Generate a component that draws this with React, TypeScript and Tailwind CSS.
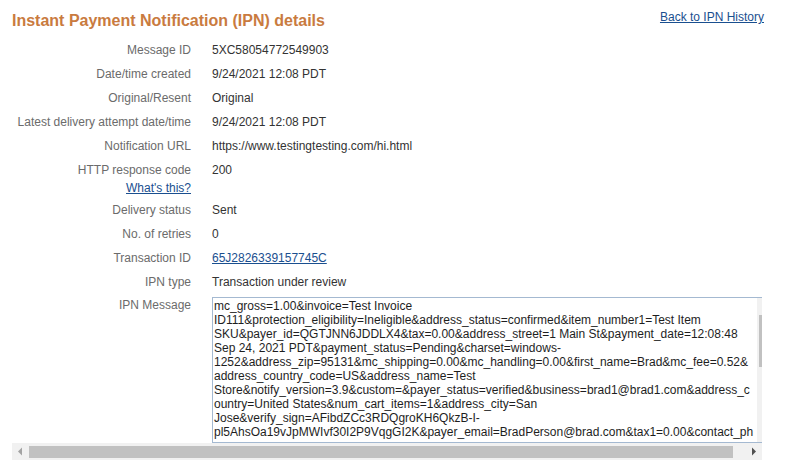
import React from "react";

const rows: { label: string; value: React.ReactNode }[] = [
  { label: "Message ID", value: "5XC58054772549903" },
  { label: "Date/time created", value: "9/24/2021 12:08 PDT" },
  { label: "Original/Resent", value: "Original" },
  { label: "Latest delivery attempt date/time", value: "9/24/2021 12:08 PDT" },
  { label: "Notification URL", value: "https://www.testingtesting.com/hi.html" },
];

const rowsAfter: { label: string; value: React.ReactNode }[] = [
  { label: "Delivery status", value: "Sent" },
  { label: "No. of retries", value: "0" },
  {
    label: "Transaction ID",
    value: (
      <a href="#" className="text-[#1a4f8f] underline">
        65J2826339157745C
      </a>
    ),
  },
  { label: "IPN type", value: "Transaction under review" },
];

const messageLines = [
  "mc_gross=1.00&invoice=Test Invoice",
  "ID111&protection_eligibility=Ineligible&address_status=confirmed&item_number1=Test Item",
  "SKU&payer_id=QGTJNN6JDDLX4&tax=0.00&address_street=1 Main St&payment_date=12:08:48",
  "Sep 24, 2021 PDT&payment_status=Pending&charset=windows-",
  "1252&address_zip=95131&mc_shipping=0.00&mc_handling=0.00&first_name=Brad&mc_fee=0.52&",
  "address_country_code=US&address_name=Test",
  "Store&notify_version=3.9&custom=&payer_status=verified&business=brad1@brad1.com&address_c",
  "ountry=United States&num_cart_items=1&address_city=San",
  "Jose&verify_sign=AFibdZCc3RDQgroKH6QkzB-I-",
  "pl5AhsOa19vJpMWIvf30I2P9VqgGI2K&payer_email=BradPerson@brad.com&tax1=0.00&contact_ph",
];

function Row({ label, value }: { label: string; value: React.ReactNode }) {
  return (
    <>
      <div className="py-[5px] text-right text-[#6b6b6b]">{label}</div>
      <div className="py-[5px]">{value}</div>
    </>
  );
}

function Arrow({ dir, color }: { dir: "left" | "right"; color: string }) {
  return (
    <svg width="17" height="17" viewBox="0 0 17 17">
      {dir === "left" ? (
        <path d="M6 8.5 L10 4.5 L10 12.5 Z" fill={color} />
      ) : (
        <path d="M11 8.5 L7 4.5 L7 12.5 Z" fill={color} />
      )}
    </svg>
  );
}

export default function App() {
  return (
    <div className="h-[470px] w-[791px] bg-white font-['Liberation_Sans',Arial,sans-serif] text-[12px] leading-[14px] text-[#333]">
      <div className="ml-3 flex w-[752px] items-start justify-between pt-3">
        <h1 className="text-[16px] font-bold leading-[18px] text-[#c97b3f]">
          Instant Payment Notification (IPN) details
        </h1>
        <a href="#" className="mt-[-2px] text-[#1a4f8f] underline">
          Back to IPN History
        </a>
      </div>

      <div className="ml-3 mt-[8px] w-[750px] overflow-hidden">
        <div className="grid grid-cols-[179px_563px] gap-x-[21px]">
          {rows.map((r) => (
            <Row key={r.label} {...r} />
          ))}

          <div className="pb-[3px] pt-[5px] text-right text-[#6b6b6b]">
            <div>HTTP response code</div>
            <a href="#" className="mt-[4px] block text-[#1a4f8f] underline">
              What's this?
            </a>
          </div>
          <div className="pt-[5px]">200</div>

          {rowsAfter.map((r) => (
            <Row key={r.label} {...r} />
          ))}

          <div className="pt-[4px] text-right text-[#6b6b6b]">IPN Message</div>
          <div className="pt-[3px]">
            <div className="flex h-[146px] w-[563px] border border-[#a4b9d1]">
              <div className="w-[544px] overflow-hidden pl-[1px] pt-[1px] text-[#1e1e1e]">
                {messageLines.map((line, i) => (
                  <div key={i} className="whitespace-pre">
                    {line}
                  </div>
                ))}
              </div>
              <div className="flex w-[17px] flex-col bg-[#f1f1f1]">
                <div className="h-[17px]" />
                <div className="mx-[2px] h-[52px] bg-[#c1c1c1]" />
              </div>
            </div>
          </div>
        </div>

        <div className="flex h-[17px] items-center bg-[#f1f1f1]">
          <Arrow dir="left" color="#a3a3a3" />
          <div className="h-[12px] w-[704px] bg-[#c1c1c1]" />
          <div className="flex-1" />
          <Arrow dir="right" color="#505050" />
        </div>
      </div>
    </div>
  );
}
